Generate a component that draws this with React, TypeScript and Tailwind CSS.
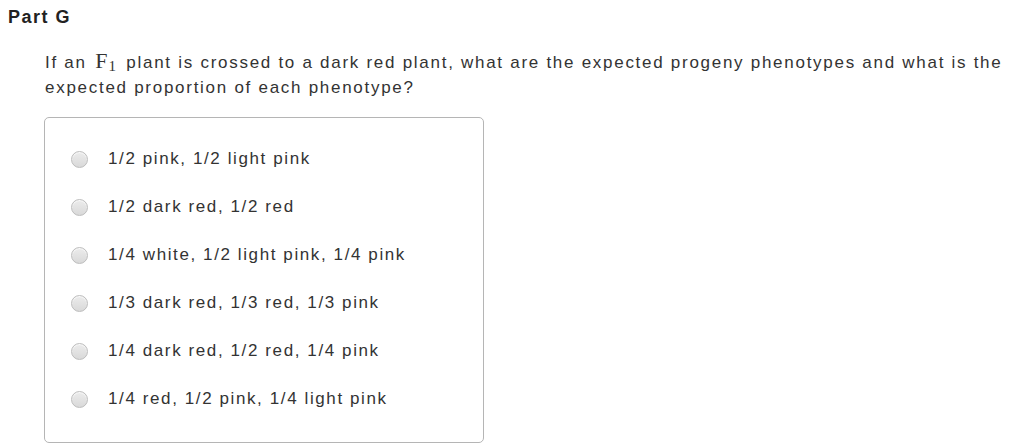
import React from "react";

const options = [
  "1/2 pink, 1/2 light pink",
  "1/2 dark red, 1/2 red",
  "1/4 white, 1/2 light pink, 1/4 pink",
  "1/3 dark red, 1/3 red, 1/3 pink",
  "1/4 dark red, 1/2 red, 1/4 pink",
  "1/4 red, 1/2 pink, 1/4 light pink",
];

export default function App() {
  return (
    <div className="w-[1024px] h-[447px] bg-white text-[#333333] overflow-hidden" style={{ fontFamily: '"Liberation Sans", Arial, sans-serif' }}>
      <div className="pl-[8px] pt-[5px] text-[18px] font-bold leading-[24px] tracking-[1.5px] text-[#222222]">Part G</div>
      <div className="pl-[45px] pr-[10px] pt-[21px] text-[17px] leading-[25px] tracking-[1.72px]">
        If an{" "}
        <span className="ml-[2px] mr-[4px] text-[22px] leading-[0] tracking-normal" style={{ fontFamily: '"Liberation Serif", "Times New Roman", serif' }}>
          F<span className="relative top-[3px] ml-[1px] text-[15px] leading-[0]">1</span>
        </span>{" "}
        plant is crossed to a dark red plant, what are the expected progeny phenotypes and what is the expected proportion of each phenotype?
      </div>
      <div className="ml-[44px] mt-[17px] w-[440px] h-[326px] border border-[#b5b5b5] rounded-[5px] pt-[17px] flex flex-col">
        {options.map((o) => (
          <div key={o} className="flex items-center h-[48px] pl-[26px]">
            <span className="w-[17px] h-[17px] rounded-full border border-[#bdbdbd] bg-gradient-to-b from-[#ececec] to-[#d9d9d9] shadow-[inset_0_1px_1px_rgba(255,255,255,0.8)]" />
            <span className="ml-[20px] text-[17px] leading-[20px] tracking-[1.6px] text-[#333333]">{o}</span>
          </div>
        ))}
      </div>
    </div>
  );
}
